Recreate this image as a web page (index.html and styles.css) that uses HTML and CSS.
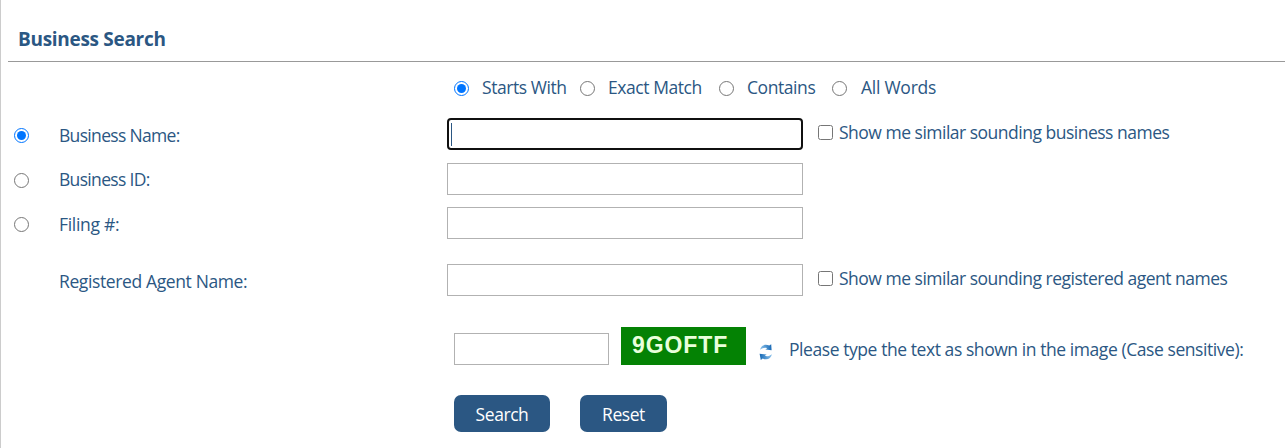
FILE: index.html
```html
<!DOCTYPE html>
<html>

<head>
  <meta charset="utf-8">
  <title>Business Search</title>
  <link rel="stylesheet" href="styles.css">
</head>

<body>

  <form class="search" onsubmit="return false">
    <h2 class="title">Business Search</h2>

    <div class="options">
      <label class="option starts"><input type="radio" name="match" checked> <span>Starts With</span></label>
      <label class="option exact"><input type="radio" name="match"> <span>Exact Match</span></label>
      <label class="option contains"><input type="radio" name="match"> <span>Contains</span></label>
      <label class="option words"><input type="radio" name="match"> <span>All Words</span></label>
    </div>

    <div class="row name">
      <input type="radio" name="type" checked>
      <label class="label">Business Name:</label>
      <div class="field active"><input type="text" class="text"></div>
      <label class="check"><input type="checkbox"> <span>Show me similar sounding business names</span></label>
    </div>

    <div class="row id">
      <input type="radio" name="type">
      <label class="label">Business ID:</label>
      <div class="field"><input type="text" class="text"></div>
    </div>

    <div class="row filing">
      <input type="radio" name="type">
      <label class="label">Filing #:</label>
      <div class="field"><input type="text" class="text"></div>
    </div>

    <div class="row agent">
      <span></span>
      <label class="label">Registered Agent Name:</label>
      <div class="field"><input type="text" class="text"></div>
      <label class="check"><input type="checkbox"> <span>Show me similar sounding registered agent names</span></label>
    </div>

    <div class="captcha">
      <input type="text" class="text code">
      <div class="captcha-image">9GOFTF</div>
      <svg class="refresh" width="14" height="18" viewBox="0 0 14 18">
        <defs>
          <linearGradient id="blue" x1="0" x2="1">
            <stop offset="0" stop-color="#8fc4ec"/>
            <stop offset="1" stop-color="#1668b5"/>
          </linearGradient>
          <linearGradient id="blue2" x1="1" x2="0">
            <stop offset="0" stop-color="#8fc4ec"/>
            <stop offset="1" stop-color="#1668b5"/>
          </linearGradient>
        </defs>
        <path d="M1 6.8C2 2.5 6 .2 10.3 2.6L12.2 1.2 12.6 7.2 6.3 6.6 8.2 5.2C5.8 4.2 3.5 5 1 6.8Z" fill="url(#blue)"/>
        <path d="M13 11.2C12 15.5 8 17.8 3.7 15.4L1.8 17 .6 10.8 7.7 11.4 5.8 12.8C8.2 13.8 10.5 13 13 11.2Z" fill="url(#blue2)"/>
      </svg>
      <span class="hint">Please type the text as shown in the image (Case sensitive):</span>
    </div>

    <div class="buttons">
      <button class="btn">Search</button>
      <button class="btn reset" type="reset">Reset</button>
    </div>
  </form>

</body>

</html>
```
FILE: styles.css
```css
* {
  box-sizing: border-box;
}

body {
  margin: 0;
  background: #fff;
  color: #2b5783;
  font-family: "Segoe UI", "Open Sans", sans-serif;
  font-size: 17.5px;
  line-height: 24px;
  letter-spacing: -0.43px;
}

.search {
  height: 448px;
  padding-left: 7px;
  border-left: 1px solid #ccc;
  overflow: hidden;
  white-space: nowrap;
}

.title {
  height: 62px;
  margin: 0;
  padding: 27px 0 0 10px;
  border-bottom: 1px solid #999;
  font-size: 19px;
  font-weight: 700;
  letter-spacing: -0.3px;
}

input[type=radio],
input[type=checkbox] {
  flex: none;
  width: 15px;
  height: 15px;
  margin: 0;
}

.options {
  display: flex;
  padding: 13px 0 0 446px;
}

.option {
  display: flex;
  align-items: center;
  gap: 13px;
}

.option input {
  margin-top: 2px;
}

.starts {
  width: 126px;
}

.exact {
  width: 139px;
}

.contains {
  width: 113px;
}

.words {
  gap: 14px;
  letter-spacing: -0.25px;
}

.row {
  display: grid;
  grid-template-columns: 45px 388px 371px auto;
  align-items: center;
  height: 32px;
  margin-top: 13px;
  padding-left: 6px;
}

.row.name {
  margin-top: 19px;
}

.row.filing {
  margin-top: 12px;
}

.row.agent {
  margin-top: 25px;
}

.row > input {
  margin-top: 2px;
}

.name > input {
  margin-top: 3px;
}

.label {
  padding-top: 1px;
}

.id .label {
  padding-top: 0;
}

.name .label,
.id .label {
  letter-spacing: -0.68px;
}

.filing .label {
  letter-spacing: -0.3px;
}

.agent .label {
  letter-spacing: -0.38px;
}

.field {
  position: relative;
  width: 356px;
  height: 32px;
}

.text {
  display: block;
  width: 100%;
  height: 32px;
  border: 1px solid #b2b2b2;
  outline: none;
}

.active .text {
  border: 2px solid #101010;
  border-radius: 4px;
}

/* caret */
.active:after {
  content: "";
  position: absolute;
  left: 4px;
  top: 5px;
  width: 1px;
  height: 23px;
  background: #2b5783;
}

.check {
  display: flex;
  align-items: center;
  gap: 6px;
  margin-top: -5px;
  letter-spacing: -0.5px;
}

.check input {
  margin-top: 1px;
}

.captcha {
  display: flex;
  align-items: flex-end;
  height: 38px;
  margin-top: 31px;
  padding-left: 446px;
}

.code {
  width: 155px;
}

.captcha-image {
  width: 125px;
  height: 38px;
  margin-left: 12px;
  padding-left: 11px;
  background: #048204;
  color: #e9ffdc;
  font: bold 23px/37px "Liberation Sans", Arial, sans-serif;
  letter-spacing: 0.9px;
}

.refresh {
  margin: 0 0 4px 13px;
}

.hint {
  margin: 0 0 4px 16px;
}

.buttons {
  display: flex;
  gap: 30px;
  margin-top: 30px;
  padding-left: 446px;
}

.btn {
  width: 96px;
  height: 37px;
  padding: 0;
  border: 0;
  border-radius: 7px;
  background: #2b5783;
  color: #fff;
  font: inherit;
  letter-spacing: inherit;
}

.reset {
  width: 87px;
}
```
